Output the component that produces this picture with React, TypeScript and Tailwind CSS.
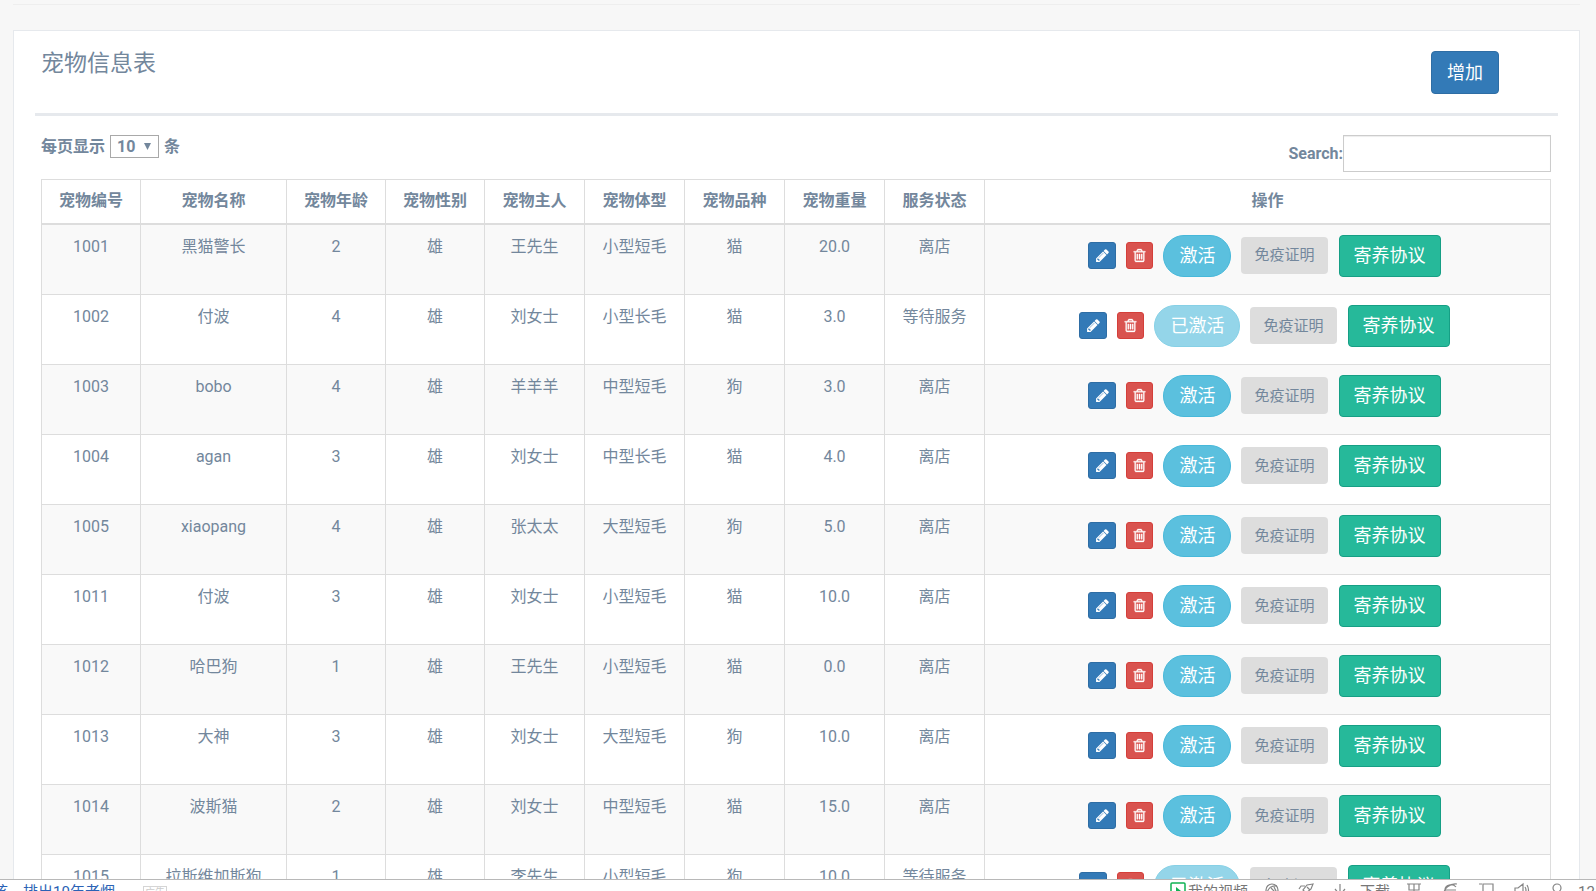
import type { ReactNode } from "react";

interface Pet {
  id: string;
  name: string;
  age: string;
  sex: string;
  owner: string;
  size: string;
  breed: string;
  weight: string;
  status: string;
  active?: boolean;
}

const columns = [
  { label: "宠物编号", width: "w-[99px]" },
  { label: "宠物名称", width: "w-[146px]" },
  { label: "宠物年龄", width: "w-[99px]" },
  { label: "宠物性别", width: "w-[99px]" },
  { label: "宠物主人", width: "w-[100px]" },
  { label: "宠物体型", width: "w-[100px]" },
  { label: "宠物品种", width: "w-[100px]" },
  { label: "宠物重量", width: "w-[100px]" },
  { label: "服务状态", width: "w-[100px]" },
  { label: "操作", width: "w-auto" },
];

const pets: Pet[] = [
  { id: "1001", name: "黑猫警长", age: "2", sex: "雄", owner: "王先生", size: "小型短毛", breed: "猫", weight: "20.0", status: "离店" },
  { id: "1002", name: "付波", age: "4", sex: "雄", owner: "刘女士", size: "小型长毛", breed: "猫", weight: "3.0", status: "等待服务", active: true },
  { id: "1003", name: "bobo", age: "4", sex: "雄", owner: "羊羊羊", size: "中型短毛", breed: "狗", weight: "3.0", status: "离店" },
  { id: "1004", name: "agan", age: "3", sex: "雄", owner: "刘女士", size: "中型长毛", breed: "猫", weight: "4.0", status: "离店" },
  { id: "1005", name: "xiaopang", age: "4", sex: "雄", owner: "张太太", size: "大型短毛", breed: "狗", weight: "5.0", status: "离店" },
  { id: "1011", name: "付波", age: "3", sex: "雄", owner: "刘女士", size: "小型短毛", breed: "猫", weight: "10.0", status: "离店" },
  { id: "1012", name: "哈巴狗", age: "1", sex: "雄", owner: "王先生", size: "小型短毛", breed: "猫", weight: "0.0", status: "离店" },
  { id: "1013", name: "大神", age: "3", sex: "雄", owner: "刘女士", size: "大型短毛", breed: "狗", weight: "10.0", status: "离店" },
  { id: "1014", name: "波斯猫", age: "2", sex: "雄", owner: "刘女士", size: "中型短毛", breed: "猫", weight: "15.0", status: "离店" },
  { id: "1015", name: "拉斯维加斯狗", age: "1", sex: "雄", owner: "李先生", size: "小型短毛", breed: "狗", weight: "10.0", status: "等待服务", active: true },
];

function PencilIcon() {
  return (
    <svg viewBox="0 0 1792 1792" className="h-[15px] w-[15px]" fill="currentColor" aria-hidden="true">
      <path d="M491 1536l91-91-235-235-91 91v107h128v128h107zm523-928q0-22-22-22-10 0-17 7l-542 542q-7 7-7 17 0 22 22 22 10 0 17-7l542-542q7-7 7-17zm-54-192l416 416-832 832h-416v-416zm683 96q0 53-37 90l-166 166-416-416 166-165q36-38 90-38 53 0 91 38l235 234q37 39 37 91z" />
    </svg>
  );
}

function TrashIcon() {
  return (
    <svg
      viewBox="0 0 1792 1792"
      className="h-[15px] w-[15px]"
      fill="currentColor"
      stroke="currentColor"
      strokeWidth="40"
      aria-hidden="true"
    >
      <path d="M704 736v576q0 14-9 23t-23 9h-64q-14 0-23-9t-9-23v-576q0-14 9-23t23-9h64q14 0 23 9t9 23zm256 0v576q0 14-9 23t-23 9h-64q-14 0-23-9t-9-23v-576q0-14 9-23t23-9h64q14 0 23 9t9 23zm256 0v576q0 14-9 23t-23 9h-64q-14 0-23-9t-9-23v-576q0-14 9-23t23-9h64q14 0 23 9t9 23zm128 724v-948h-896v948q0 22 7 40.5t14.5 27 10.5 8.5h832q3 0 10.5-8.5t14.5-27 7-40.5zm-672-1076h448l-48-117q-7-9-17-11h-317q-10 2-17 11zm928 32v64q0 14-9 23t-23 9h-96v948q0 83-47 143.5t-113 60.5h-832q-66 0-113-58.5t-47-141.5v-952h-96q-14 0-23-9t-9-23v-64q0-14 9-23t23-9h309l70-167q15-37 54-63t79-26h320q40 0 79 26t54 63l70 167h309q14 0 23 9t9 23z" />
    </svg>
  );
}

function RowActions({ active }: { active?: boolean }) {
  return (
    <div className="flex items-center justify-center gap-[10px] pr-[6px] text-white">
      <button
        aria-label="Edit"
        className="mb-px flex h-[27px] w-7 items-center justify-center rounded-[3px] border border-[#2e6da4] bg-[#337ab7]"
      >
        <PencilIcon />
      </button>
      <button
        aria-label="Delete"
        className="mb-px flex h-[27px] w-[27px] items-center justify-center rounded-[3px] border border-[#d43f3a] bg-[#d9534f]"
      >
        <TrashIcon />
      </button>
      <button
        disabled={active}
        className="h-[42px] rounded-full border border-[#46b8da] bg-[#5bc0de] px-[15px] text-lg leading-6 disabled:opacity-65"
      >
        {active ? "已激活" : "激活"}
      </button>
      <button className="mb-px h-[37px] rounded bg-[#ddd] px-[13px] text-[15px] leading-6 text-[#73879c]">
        免疫证明
      </button>
      <button className="ml-px h-[42px] rounded-[4px] border border-[#169f85] bg-[#26b99a] px-[14px] text-lg leading-6">
        寄养协议
      </button>
    </div>
  );
}

function ToolIcon({ children }: { children: ReactNode }) {
  return (
    <svg
      viewBox="0 0 16 16"
      className="h-4 w-4 shrink-0"
      fill="none"
      stroke="#858585"
      strokeWidth="1.2"
      aria-hidden="true"
    >
      {children}
    </svg>
  );
}

function StatusBar() {
  return (
    <footer className="flex h-3 shrink-0 items-start justify-between overflow-hidden border-t border-[#b8b8b8] bg-white pt-[2px] text-[15px] leading-5 text-[#777]">
      <div className="flex items-start">
        <a href="#" className="-ml-[7px] flex gap-[15px] whitespace-nowrap text-[#2b62b5]">
          <span>咳</span>
          <span>排出10年老烟</span>
        </a>
        <span className="mt-1 ml-7 border border-[#d5d5d5] px-px text-[10px] leading-3 text-[#ccc]">广告</span>
      </div>
      <div className="flex items-start">
        <svg viewBox="0 0 16 16" className="h-4 w-4" fill="none" stroke="#0fb253" strokeWidth="1.5" aria-hidden="true">
          <rect x="1" y="1" width="14" height="14" rx="1" />
          <path d="M6 5v8l5-4z" fill="#0fb253" stroke="none" />
        </svg>
        <span className="ml-[2px]">我的视频</span>
        <div className="ml-4 flex gap-[18px]">
          <ToolIcon>
            <circle cx="8" cy="8" r="6" />
            <path d="M3 13C3 7 7 3 13 4M7 6l5 5M10 5l3 6" />
          </ToolIcon>
          <ToolIcon>
            <path d="M15 2L9 3 5 8l3 3 5-4zM7 4L3 4 1 7M12 9v4M9 5l3 3" />
          </ToolIcon>
          <ToolIcon>
            <path d="M8 2v10M3 7l5 6 5-6" />
          </ToolIcon>
        </div>
        <span className="ml-3">下载</span>
        <div className="ml-4 flex gap-5">
          <ToolIcon>
            <path d="M1 2h14M3 2v6h10V2M8 2v6M8 8v5" />
          </ToolIcon>
          <ToolIcon>
            <path d="M3 8a6 5 0 0 1 11-3M3 8h11M3 8c0 7 8 7 11 4M2 13C1 7 8 1 15 2" />
          </ToolIcon>
          <ToolIcon>
            <path d="M5 2h10v11H5zM1 2h3" />
          </ToolIcon>
          <ToolIcon>
            <path d="M1 6h3l5-4v12l-5-4H1zM11 5q2 3 0 6M13 3q3 5 0 10" />
          </ToolIcon>
          <ToolIcon>
            <circle cx="7" cy="6" r="4" />
            <path d="M10 10l3 4" />
          </ToolIcon>
        </div>
        <span className="ml-3 w-[18px] overflow-hidden">125%</span>
      </div>
    </footer>
  );
}

export default function App() {
  return (
    <div className="flex h-screen flex-col overflow-hidden bg-[#f7f7f7] font-[Roboto,'Noto_Sans_CJK_SC',sans-serif] text-base text-[#73879c]">
      <main className="min-h-0 flex-1 overflow-hidden pr-4 pl-[13px]">
        <div className="mt-1 border-t border-[#eee]" />
        <section className="mt-[25px] border border-[#e6e9ed] bg-white px-[21px]">
          <header className="flex items-start justify-between border-b-3 border-[#e6e9ed] pt-5 pr-[59px] pb-[19px] pl-[6px]">
            <h2 className="text-[23px] leading-[26px]">宠物信息表</h2>
            <button className="h-[43px] rounded-[4px] border border-[#2e6da4] bg-[#337ab7] px-[15px] text-lg leading-6 text-white">
              增加
            </button>
          </header>

          <div className="pt-[19px] pr-[7px] pl-[6px]">
            <div className="flex items-start justify-between pb-[7px] font-bold">
              <label className="flex h-[23px] items-center gap-[5px]">
                每页显示
                <span className="relative">
                  <select className="block h-[23px] w-[49px] appearance-none border border-[#a9a9a9] bg-white pl-[6px] text-base leading-5 font-bold">
                    <option>10</option>
                    <option>25</option>
                    <option>50</option>
                    <option>100</option>
                  </select>
                  <svg
                    viewBox="0 0 8 8"
                    className="pointer-events-none absolute top-2 right-2 h-[7px] w-[7px]"
                    fill="currentColor"
                    aria-hidden="true"
                  >
                    <path d="M0 0h8L4 8z" />
                  </svg>
                </span>
                条
              </label>
              <label className="flex items-center">
                Search:
                <input
                  type="search"
                  className="h-[37px] w-52 border border-[#ccc] bg-white px-2 font-normal shadow-[inset_0_1px_1px_rgba(0,0,0,0.075)]"
                />
              </label>
            </div>

            <table className="w-full table-fixed border-collapse border border-[#ddd] text-center">
              <thead>
                <tr className="h-11">
                  {columns.map((col) => (
                    <th key={col.label} className={`${col.width} border border-b-2 border-[#ddd] font-bold`}>
                      {col.label}
                    </th>
                  ))}
                </tr>
              </thead>
              <tbody>
                {pets.map((pet) => {
                  const { active, ...fields } = pet;

                  return (
                    <tr key={pet.id} className="h-[70px] align-top first:h-[71px] odd:bg-[#f9f9f9]">
                      {Object.entries(fields).map(([key, value]) => (
                        <td key={key} className="border border-[#ddd] pt-[10px]">
                          {value}
                        </td>
                      ))}
                      <td className="border border-[#ddd] pt-[10px]">
                        <RowActions active={active} />
                      </td>
                    </tr>
                  );
                })}
              </tbody>
            </table>
          </div>
        </section>
      </main>
      <StatusBar />
    </div>
  );
}
